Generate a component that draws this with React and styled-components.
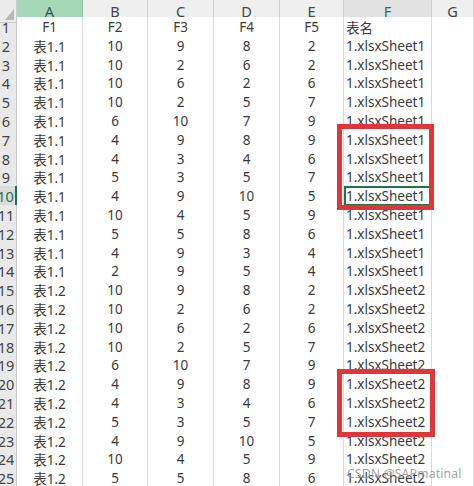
import React from "react";
import styled, { createGlobalStyle } from "styled-components";

const Global = createGlobalStyle`
  html, body { margin: 0; padding: 0; background: #fff; overflow: hidden; }
  body { font-family: "Noto Sans", "Noto Sans CJK SC", sans-serif; }
`;

const COLS = "17px 66px 65px 66px 66px 64px 88px 42px";
const ROW_H = 18.8;
const HEAD_H = 17;
const GRID = "#dadada";
const GREEN = "#217346";

const Sheet = styled.div`
  position: relative;
  width: 474px;
  height: 486px;
  overflow: hidden;
  display: flex;
  flex-direction: column;
  font-family: "Noto Sans", "Noto Sans CJK SC", sans-serif;
  font-size: 13.5px;
  color: #3a3a3a;
`;

const Row = styled.div`
  display: grid;
  grid-template-columns: ${COLS};
  height: ${(p) => (p.$head ? HEAD_H : ROW_H)}px;
  flex: none;
`;

const Corner = styled.div`
  position: relative;
  background: #ececec;
  border-right: 1px solid #c9c9c9;
  border-bottom: 1px solid #c9c9c9;
  box-sizing: border-box;
  &::after {
    content: "";
    position: absolute;
    right: 2px;
    bottom: 2px;
    width: 9px;
    height: 11px;
    background: #b9b9b9;
    clip-path: polygon(100% 0, 100% 100%, 0 100%);
  }
`;

const ColHead = styled.div`
  box-sizing: border-box;
  display: flex;
  align-items: center;
  justify-content: center;
  font-size: 14.5px;
  background: ${(p) =>
    p.$state === "filled" ? "#a6d8b8" : p.$state === "active" ? "#e2e2e2" : "#efefef"};
  color: ${(p) => (p.$state === "active" ? GREEN : p.$state === "filled" ? "#2d5a3f" : "#444")};
  border-right: 1px solid ${(p) => (p.$state === "filled" ? "#8cc5a2" : "#d0d0d0")};
  border-bottom: ${(p) => (p.$state === "active" ? `2px solid ${GREEN}` : "1px solid #c9c9c9")};
  padding-top: ${(p) => (p.$state === "active" ? "1px" : "0")};
`;

const RowHead = styled.div`
  box-sizing: border-box;
  display: flex;
  align-items: center;
  justify-content: center;
  padding-right: 4px;
  overflow: hidden;
  white-space: nowrap;
  font-size: 14.5px;
  background: ${(p) => (p.$active ? "#dcdcdc" : "#e9e9e9")};
  color: ${(p) => (p.$active ? GREEN : "#444")};
  border-right: ${(p) => (p.$active ? `2px solid ${GREEN}` : "1px solid #c9c9c9")};
  border-bottom: 1px solid #d0d0d0;
`;

const Cell = styled.div`
  position: relative;
  box-sizing: border-box;
  display: flex;
  align-items: center;
  justify-content: ${(p) => (p.$left ? "flex-start" : "center")};
  padding-left: ${(p) => (p.$left ? "2px" : "0")};
  white-space: nowrap;
  overflow: visible;
  background: #fff;
  border-right: 1px solid ${GRID};
  border-bottom: 1px solid ${GRID};
  box-shadow: ${(p) => (p.$active ? `inset 0 0 0 2px ${GREEN}` : "none")};
  z-index: ${(p) => (p.$active ? 1 : 0)};
`;

const Highlight = styled.div`
  position: absolute;
  box-sizing: border-box;
  border: 5px solid #e2353a;
  z-index: 3;
  pointer-events: none;
`;

const Watermark = styled.div`
  position: absolute;
  left: 347px;
  top: 465px;
  font-family: "Noto Sans", sans-serif;
  font-size: 12.3px;
  color: rgba(130, 130, 130, 0.75);
  letter-spacing: 0.1px;
  z-index: 4;
  text-shadow: 0 0 1px rgba(255, 255, 255, 0.6);
`;

const raw = [
  ["10", "9", "8", "2"],
  ["10", "2", "6", "2"],
  ["10", "6", "2", "6"],
  ["10", "2", "5", "7"],
  ["6", "10", "7", "9"],
  ["4", "9", "8", "9"],
  ["4", "3", "4", "6"],
  ["5", "3", "5", "7"],
  ["4", "9", "10", "5"],
  ["10", "4", "5", "9"],
  ["5", "5", "8", "6"],
  ["4", "9", "3", "4"],
  ["2", "9", "5", "4"],
];

const rows = [
  ["F1", "F2", "F3", "F4", "F5", "表名"],
  ...raw.map((r) => ["表1.1", ...r, "1.xlsxSheet1"]),
  ...raw.slice(0, 11).map((r) => ["表1.2", ...r, "1.xlsxSheet2"]),
];

const letters = ["A", "B", "C", "D", "E", "F", "G"];

export default function App() {
  return (
    <>
      <Global />
      <Sheet>
        <Row $head>
          <Corner />
          {letters.map((l) => (
            <ColHead key={l} $state={l === "A" ? "filled" : l === "F" ? "active" : undefined}>
              {l}
            </ColHead>
          ))}
        </Row>
        {rows.map((r, i) => {
          const n = i + 1;
          return (
            <Row key={n}>
              <RowHead $active={n === 10}>{n}</RowHead>
              {r.map((v, j) => (
                <Cell key={j} $left={j === 5} $active={n === 10 && j === 5}>
                  {v}
                </Cell>
              ))}
              <Cell />
            </Row>
          );
        })}
        <Highlight style={{ left: 337, top: 124, width: 97, height: 86 }} />
        <Highlight style={{ left: 337, top: 369, width: 98, height: 68 }} />
        <Watermark>CSDN @SAPmatinal</Watermark>
      </Sheet>
    </>
  );
}
